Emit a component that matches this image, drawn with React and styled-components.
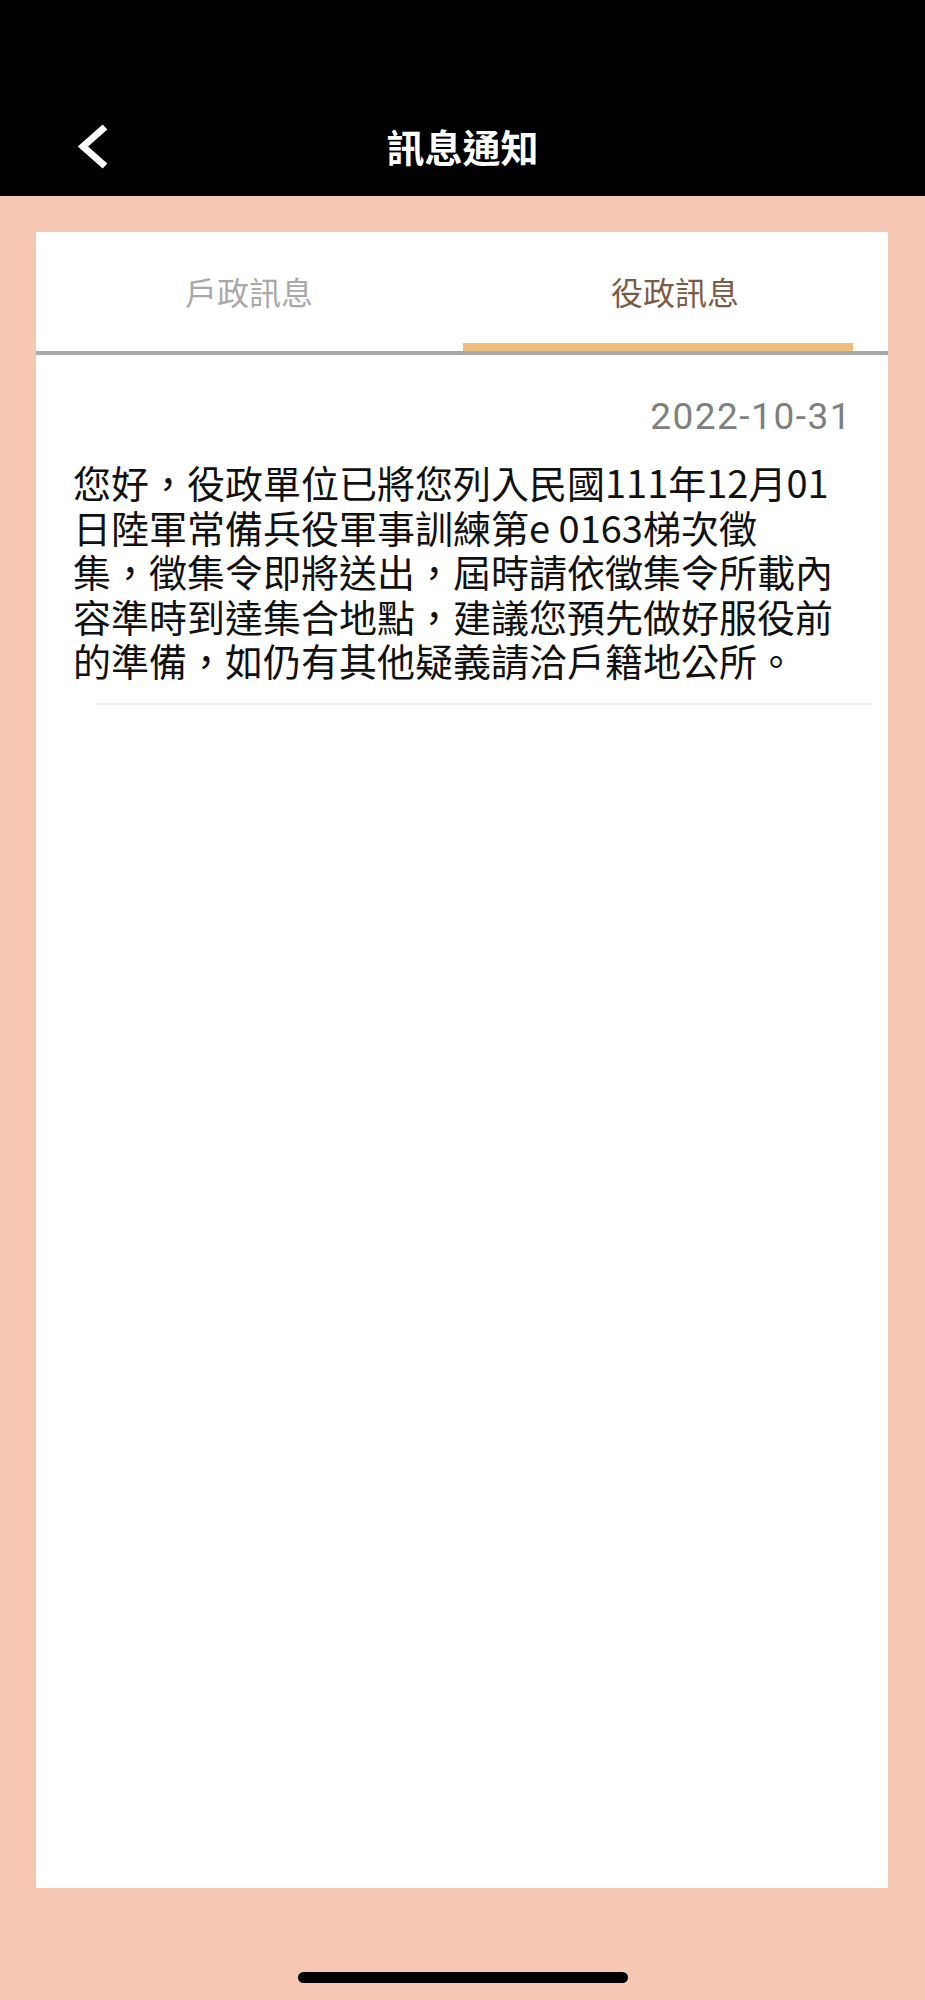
import React from "react";
import styled, { createGlobalStyle } from "styled-components";

const Global = createGlobalStyle`
  html, body { margin: 0; padding: 0; }
  body { font-family: "Noto Sans CJK TC", "Noto Sans", sans-serif; background: #f6c8b4; }
  * { box-sizing: border-box; }
`;

const Page = styled.div`
  width: 925px;
  min-height: 2000px;
  background: #f6c8b4;
  display: flex;
  flex-direction: column;
`;

const Header = styled.header`
  height: 196px;
  background: #000;
  padding-top: 96px;
`;

const NavRow = styled.div`
  height: 100px;
  display: grid;
  grid-template-columns: 1fr auto 1fr;
  align-items: center;
`;

const BackButton = styled.button`
  justify-self: start;
  margin-left: 72px;
  padding: 0;
  border: 0;
  background: transparent;
  display: flex;
  width: 40px;
  height: 56px;
  cursor: pointer;
`;

const Title = styled.h1`
  margin: 0;
  color: #fff;
  font-family: "Noto Sans CJK TC", sans-serif;
  font-weight: 700;
  font-size: 38px;
  line-height: 44px;
  letter-spacing: 0;
`;

const Card = styled.main`
  margin: 36px 37px 0 36px;
  height: 1656px;
  background: #fff;
  display: flex;
  flex-direction: column;
`;

const TabBar = styled.nav`
  display: grid;
  grid-template-columns: 1fr 1fr;
  border-bottom: 4px solid #a9a9a9;
`;

const Tab = styled.div`
  display: flex;
  flex-direction: column;
  height: 119px;
`;

const TabLabel = styled.div`
  flex: 1;
  display: flex;
  align-items: center;
  justify-content: center;
  padding-top: 7px;
  font-size: 32px;
  color: ${(p) => (p.$active ? "#7a5b45" : "#a9a9a9")};
`;

const Indicator = styled.div`
  height: 8px;
  margin-left: 1px;
  margin-right: 35px;
  background: ${(p) => (p.$active ? "#efbe7d" : "transparent")};
`;

const Message = styled.article`
  display: flex;
  flex-direction: column;
`;

const DateText = styled.div`
  align-self: flex-end;
  margin-top: 43px;
  margin-right: 36px;
  font-family: Roboto, "Liberation Sans", sans-serif;
  font-size: 37px;
  line-height: 37px;
  letter-spacing: 1.5px;
  color: #7f7f80;
`;

const Body = styled.div`
  margin: 25px 0 0 37px;
  width: 800px;
  display: flex;
  flex-direction: column;
`;

const Line = styled.div`
  font-size: 38px;
  line-height: 44.5px;
  height: 44.5px;
  color: #111;
  white-space: nowrap;
`;

const Separator = styled.hr`
  margin: 20px 16px 0 60px;
  height: 2px;
  border: 0;
  background: #ececec;
`;

const Footer = styled.div`
  flex: 1;
  display: flex;
  justify-content: center;
  padding-top: 84px;
`;

const HomeBar = styled.div`
  width: 330px;
  height: 11px;
  border-radius: 6px;
  background: #000;
`;

const Chevron = () => (
  <svg width="40" height="56" viewBox="0 0 40 56">
    <polyline
      points="33,9 11,28.5 33,48"
      fill="none"
      stroke="#fff"
      strokeWidth="7"
      strokeLinecap="butt"
      strokeLinejoin="miter"
    />
  </svg>
);

const tabs = [
  { label: "戶政訊息", active: false },
  { label: "役政訊息", active: true },
];

const lines = [
  "您好，役政單位已將您列入民國111年12月01",
  "日陸軍常備兵役軍事訓練第e 0163梯次徵",
  "集，徵集令即將送出，屆時請依徵集令所載內",
  "容準時到達集合地點，建議您預先做好服役前",
  "的準備，如仍有其他疑義請洽戶籍地公所。",
];

export default function App() {
  return (
    <Page>
      <Global />
      <Header>
        <NavRow>
          <BackButton aria-label="返回">
            <Chevron />
          </BackButton>
          <Title>訊息通知</Title>
          <span />
        </NavRow>
      </Header>
      <Card>
        <TabBar>
          {tabs.map((t) => (
            <Tab key={t.label}>
              <TabLabel $active={t.active}>{t.label}</TabLabel>
              <Indicator $active={t.active} />
            </Tab>
          ))}
        </TabBar>
        <Message>
          <DateText>2022-10-31</DateText>
          <Body>
            {lines.map((l, i) => (
              <Line key={i}>{l}</Line>
            ))}
          </Body>
          <Separator />
        </Message>
      </Card>
      <Footer>
        <HomeBar />
      </Footer>
    </Page>
  );
}
